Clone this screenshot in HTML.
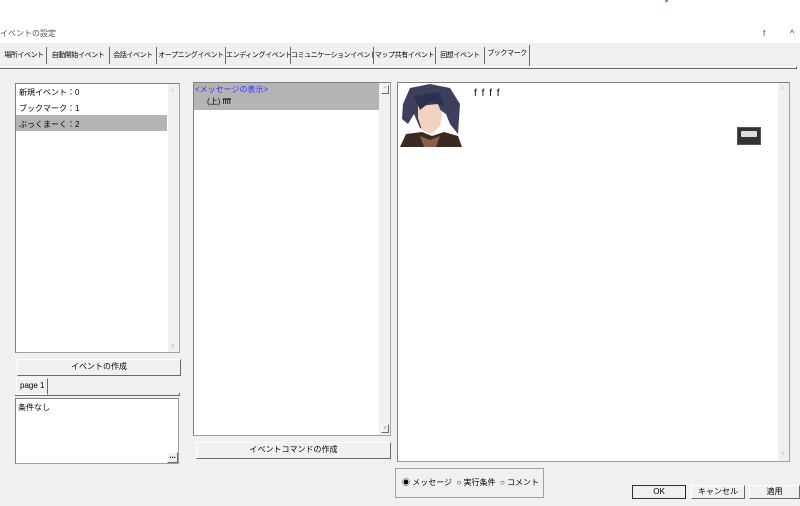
<!DOCTYPE html>
<html><head><meta charset="utf-8"><style>
*{box-sizing:border-box;margin:0;padding:0}
body{width:800px;height:506px;overflow:hidden;background:#f0f0f0;font-family:"Liberation Sans","Noto Sans CJK JP",sans-serif;font-size:8px;color:#000;position:relative}
.a{position:absolute}
.top{left:0;top:0;width:800px;height:43px;background:#fff}
.white{background:#fff;border:1px solid #a0a0a0;border-top-color:#808080;border-left-color:#808080}
.btn{background:#f0f0f0;border:1px solid #fff;border-right-color:#696969;border-bottom-color:#696969;text-align:center;line-height:14px;font-size:8px}
.sb{background:#f0f0f0}
.tab{position:absolute;top:47px;height:17px;line-height:17px;font-size:7px;white-space:nowrap;letter-spacing:-0.4px;border-right:1px solid #696969;text-align:center;overflow:hidden}
</style></head><body>
<div class="a top"></div>
<div class="a" style="left:0;top:28px;font-size:8px;color:#555">イベントの設定</div>
<div class="a" style="left:665px;top:0;width:3px;height:2px;background:#e66"></div>
<div class="a" style="left:763px;top:29px;font-size:8px;color:#444">f</div>
<div class="a" style="left:790px;top:28px;font-size:9px;color:#333">^</div>
<div class="tab" style="left:2px;width:45px">場所イベント</div>
<div class="tab" style="left:47px;width:63px">自動開始イベント</div>
<div class="tab" style="left:110px;width:47px">会話イベント</div>
<div class="tab" style="left:157px;width:69px">オープニングイベント</div>
<div class="tab" style="left:226px;width:65px">エンディングイベント</div>
<div class="tab" style="left:291px;width:83px">コミュニケーションイベント</div>
<div class="tab" style="left:374px;width:62px">マップ共有イベント</div>
<div class="tab" style="left:436px;width:49px">回想イベント</div>
<div class="a" style="left:485px;top:45px;width:45px;height:21px;background:#f0f0f0;border-right:1px solid #696969;line-height:18px;text-align:center;font-size:7px;letter-spacing:-0.4px;white-space:nowrap">ブックマーク</div>
<div class="a" style="left:0;top:66px;width:797px;height:3px;border-top:1px solid #fff;border-bottom:1px solid #696969;border-right:1px solid #696969"></div>

<div class="a white" style="left:15px;top:83px;width:165px;height:270px"></div>
<div class="a sb" style="left:168px;top:84px;width:11px;height:268px"></div>
<div class="a" style="left:19px;top:87px">新規イベント：0</div>
<div class="a" style="left:19px;top:103px">ブックマーク：1</div>
<div class="a" style="left:16px;top:115px;width:151px;height:16px;background:#b4b4b4;padding:4px 0 0 3px">ぶっくまーく：2</div>
<div class="a" style="left:171px;top:89px;color:#bbb;font-size:7px">^</div>
<div class="a" style="left:171px;top:343px;color:#bbb;font-size:7px">v</div>
<div class="a btn" style="left:17px;top:359px;width:164px;height:17px">イベントの作成</div>
<div class="a" style="left:16px;top:378px;width:32px;height:17px;border:1px solid #fff;border-right-color:#696969;line-height:14px;padding-left:3px">page 1</div>
<div class="a" style="left:15px;top:393px;width:165px;height:3px;border-bottom:1px solid #696969;border-right:1px solid #696969"></div>
<div class="a white" style="left:15px;top:398px;width:164px;height:66px;padding:3px 2px">条件なし</div>
<div class="a btn" style="left:167px;top:452px;width:11px;height:11px;line-height:6px;font-weight:bold">...</div>

<div class="a white" style="left:193px;top:82px;width:198px;height:354px"></div>
<div class="a sb" style="left:379px;top:83px;width:11px;height:352px"></div>
<div class="a" style="left:194px;top:83px;width:185px;height:27px;background:#b4b4b4"></div>
<div class="a" style="left:195px;top:84px;color:#3333ee">&lt;メッセージの表示&gt;</div>
<div class="a" style="left:207px;top:96px">(上) ffff</div>
<div class="a btn" style="left:381px;top:85px;width:8px;height:9px;line-height:6px;color:#999;font-size:6px">^</div>
<div class="a btn" style="left:381px;top:424px;width:8px;height:9px;line-height:6px;color:#999;font-size:6px">v</div>
<div class="a btn" style="left:196px;top:442px;width:195px;height:17px">イベントコマンドの作成</div>

<div class="a white" style="left:397px;top:82px;width:393px;height:380px"></div>
<div class="a sb" style="left:778px;top:83px;width:11px;height:378px"></div>
<div class="a" style="left:781px;top:87px;color:#bbb;font-size:7px">^</div>
<div class="a" style="left:781px;top:450px;color:#bbb;font-size:7px">v</div>
<svg class="a" style="left:400px;top:84px" width="62" height="63" viewBox="0 0 62 63">
<rect width="62" height="63" fill="#fff"/>
<path d="M3 20 L10 4 L30 0 L50 4 L60 20 L58 50 L50 40 L46 30 L40 26 L38 40 L30 48 L20 44 L14 30 L8 40 L2 35Z" fill="#3c3f5e"/>
<path d="M18 22 L38 20 L42 30 L40 42 L32 50 L22 46 L18 34Z" fill="#f2d2c0"/>
<path d="M14 12 L40 8 L44 22 L30 18 L20 26Z" fill="#2e3050"/>
<path d="M0 63 L6 50 L22 48 L32 52 L44 48 L58 52 L62 63Z" fill="#3a2a22"/>
<path d="M20 52 L30 56 L40 52 L36 63 L24 63Z" fill="#8a6048"/>
</svg>
<div class="a" style="left:474px;top:88px;font-size:10px;letter-spacing:5px">ffff</div>
<div class="a" style="left:737px;top:127px;width:24px;height:18px;background:#333;border:1px solid #555"><div style="margin:3px 3px;height:6px;background:#ddd;border-radius:1px"></div></div>

<div class="a" style="left:395px;top:468px;width:149px;height:30px;border:1px solid #a0a0a0"></div>
<div class="a" style="left:402px;top:477px;white-space:nowrap">◉ メッセージ &nbsp;○ 実行条件 &nbsp;○ コメント</div>
<div class="a btn" style="left:632px;top:485px;width:54px;height:14px;line-height:12px;border:1px solid #333;border-right-color:#222">OK</div>
<div class="a btn" style="left:691px;top:485px;width:54px;height:14px;line-height:12px">キャンセル</div>
<div class="a btn" style="left:749px;top:485px;width:51px;height:14px;line-height:12px">適用</div>
</body></html>
